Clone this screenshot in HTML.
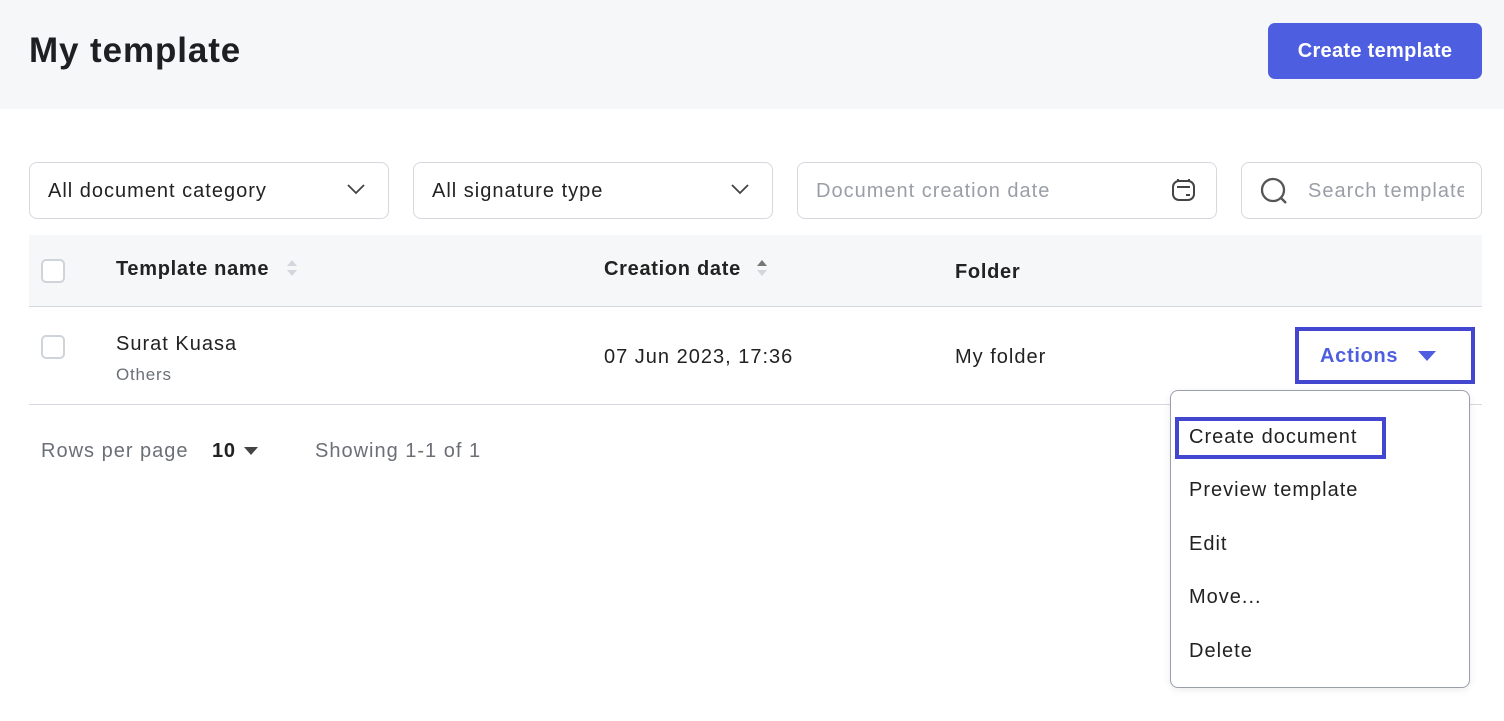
<!DOCTYPE html>
<html><head><meta charset="utf-8"><style>
*{box-sizing:border-box;margin:0;padding:0}
body{width:1504px;height:721px;background:#fff;font-family:"Liberation Sans",sans-serif;color:#222;position:relative;overflow:hidden}
.a{position:absolute}
.hdr{left:0;top:0;width:1504px;height:109px;background:#f6f7f9}
.box{border:1px solid #d5d8de;border-radius:8px;height:57px;top:162px;background:#fff}
.t{font-size:20px;white-space:nowrap;letter-spacing:1px}
.b{font-weight:bold;letter-spacing:0.7px}
.ph{color:#9a9ea6}
.cb{width:24px;height:24px;border:2px solid #cfd3da;border-radius:5px;background:#fff}
</style></head><body>
<div class="a hdr"></div>
<div class="a" style="left:29px;top:31px;font-size:35px;font-weight:bold;color:#1e1f22;letter-spacing:0.9px">My template</div>
<div class="a" style="left:1268px;top:23px;width:214px;height:56px;background:#4e5ee0;border-radius:7px;color:#fff;font-size:20px;font-weight:bold;text-align:center;line-height:56px;letter-spacing:0.3px">Create template</div>

<div class="a box" style="left:29px;width:360px"></div>
<div class="a t" style="left:48px;top:180px">All document category</div>
<svg class="a" style="left:346px;top:182px" width="20" height="14"><path d="M2 3l8 8 8-8" fill="none" stroke="#444" stroke-width="1.8"/></svg>
<div class="a box" style="left:413px;width:360px"></div>
<div class="a t" style="left:432px;top:180px">All signature type</div>
<svg class="a" style="left:730px;top:182px" width="20" height="14"><path d="M2 3l8 8 8-8" fill="none" stroke="#444" stroke-width="1.8"/></svg>
<div class="a box" style="left:797px;width:420px"></div>
<div class="a t ph" style="left:816px;top:180px">Document creation date</div>
<svg class="a" style="left:1170px;top:176px" width="28" height="28"><rect x="3" y="5" width="21" height="19" rx="6" fill="none" stroke="#444" stroke-width="2"/><path d="M8 3v3M19 3v3M7 11h13M16 19h4" stroke="#444" stroke-width="2"/></svg>
<div class="a box" style="left:1241px;width:241px"></div>
<svg class="a" style="left:1258px;top:175px" width="32" height="32"><circle cx="15" cy="15" r="11" fill="none" stroke="#555" stroke-width="2.3"/><path d="M23 23l5 5" stroke="#555" stroke-width="2.3"/></svg>
<div class="a t ph" style="left:1308px;top:180px;width:156px;overflow:hidden">Search template</div>

<div class="a" style="left:29px;top:235px;width:1453px;height:72px;background:#f6f7f9;border-bottom:1px solid #d5d8de"></div>
<div class="a cb" style="left:41px;top:259px"></div>
<div class="a t b" style="left:116px;top:258px">Template name</div>
<svg class="a" style="left:285px;top:258px" width="14" height="20"><path d="M2 8l5-6 5 6z M2 12l5 6 5-6z" fill="#d3d6dc"/></svg>
<div class="a t b" style="left:604px;top:258px">Creation date</div>
<svg class="a" style="left:755px;top:258px" width="14" height="20"><path d="M2 8l5-6 5 6z" fill="#777"/><path d="M2 12l5 6 5-6z" fill="#d3d6dc"/></svg>
<div class="a t b" style="left:955px;top:261px">Folder</div>

<div class="a cb" style="left:41px;top:335px"></div>
<div class="a t" style="left:116px;top:333px">Surat Kuasa</div>
<div class="a" style="left:116px;top:365px;font-size:17px;color:#6b6f76;letter-spacing:0.8px">Others</div>
<div class="a t" style="left:604px;top:346px">07 Jun 2023, 17:36</div>
<div class="a t" style="left:955px;top:346px">My folder</div>
<div class="a" style="left:1295px;top:327px;width:180px;height:57px;border:4px solid #4347d0"></div>
<div class="a t b" style="left:1320px;top:345px;color:#4e5ee0">Actions</div>
<svg class="a" style="left:1417px;top:350px" width="20" height="12"><path d="M1 1h18l-9 10z" fill="#4e5ee0"/></svg>
<div class="a" style="left:29px;top:404px;width:1453px;height:1px;background:#d5d8de"></div>

<div class="a t" style="left:41px;top:440px;color:#6b6f76">Rows per page</div>
<div class="a t b" style="left:212px;top:440px">10</div>
<svg class="a" style="left:243px;top:446px" width="16" height="10"><path d="M1 1h14l-7 8z" fill="#444"/></svg>
<div class="a t" style="left:315px;top:440px;color:#6b6f76">Showing 1-1 of 1</div>

<div class="a" style="left:1170px;top:390px;width:300px;height:298px;border:1px solid #9aa0ab;border-radius:8px;background:#fff;box-shadow:0 2px 8px rgba(0,0,0,.08)"></div>
<div class="a" style="left:1175px;top:417px;width:211px;height:42px;border:4px solid #4347d0"></div>
<div class="a t" style="left:1189px;top:426px">Create document</div>
<div class="a t" style="left:1189px;top:479px">Preview template</div>
<div class="a t" style="left:1189px;top:533px">Edit</div>
<div class="a t" style="left:1189px;top:586px">Move...</div>
<div class="a t" style="left:1189px;top:640px">Delete</div>
</body></html>
